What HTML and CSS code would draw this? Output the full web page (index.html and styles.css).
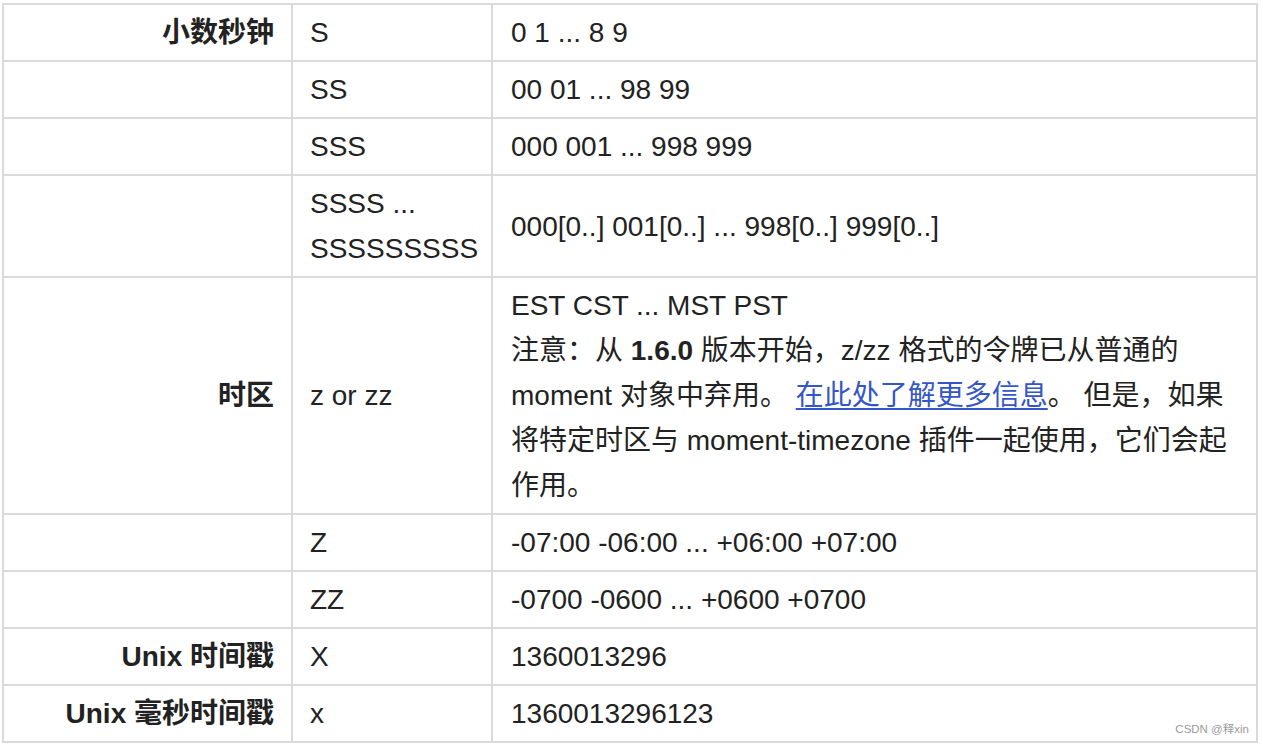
FILE: index.html
```html
<!DOCTYPE html>
<html lang="zh-CN">
<head>
<meta charset="utf-8">
<title>moment 格式令牌</title>
<link rel="stylesheet" href="styles.css">
</head>
<body>
<div class="page">
  <table class="tokens">
    <colgroup>
      <col class="c-name">
      <col class="c-token">
      <col class="c-out">
    </colgroup>
    <tbody>
      <tr><th>小数秒钟</th><td>S</td><td class="out">0 1 ... 8 9</td></tr>
      <tr><th></th><td>SS</td><td class="out">00 01 ... 98 99</td></tr>
      <tr><th></th><td>SSS</td><td class="out">000 001 ... 998 999</td></tr>
      <tr><th></th><td>SSSS ... SSSSSSSSS</td><td class="out">000[0..] 001[0..] ... 998[0..] 999[0..]</td></tr>
      <tr><th>时区</th><td>z or zz</td><td class="out">EST CST ... MST PST<br>注意：从 <strong>1.6.0</strong> 版本开始，z/zz 格式的令牌已从普通的 moment 对象中弃用。 <a href="#">在此处了解更多信息</a>。 但是，如果将特定时区与 moment-timezone 插件一起使用，它们会起作用。</td></tr>
      <tr><th></th><td>Z</td><td class="out">-07:00 -06:00 ... +06:00 +07:00</td></tr>
      <tr><th></th><td>ZZ</td><td class="out">-0700 -0600 ... +0600 +0700</td></tr>
      <tr><th>Unix 时间戳</th><td>X</td><td class="out">1360013296</td></tr>
      <tr><th>Unix 毫秒时间戳</th><td>x</td><td class="out">1360013296123</td></tr>
    </tbody>
  </table>
  <div class="watermark">CSDN @释xin</div>
</div>
</body>
</html>
```

FILE: styles.css
```css
html, body {
  margin: 0;
  padding: 0;
  background: #ffffff;
}

body {
  font-family: "Liberation Sans", "Noto Sans CJK SC", sans-serif;
  color: #222222;
}

.page {
  position: relative;
  width: 1263px;
  height: 744px;
  overflow: hidden;
  padding: 3px 0 0 2px;
  box-sizing: border-box;
}

.tokens {
  border-collapse: collapse;
  table-layout: fixed;
  width: 1256px;
  font-size: 28px;
  line-height: 45px;
}

.c-name { width: 289px; }
.c-token { width: 200px; }
.c-out { width: 765px; }

.tokens th,
.tokens td {
  border: 2px solid #dadada;
  padding: 5px 18px 5px 17px;
  vertical-align: middle;
  text-align: left;
  font-weight: normal;
}

.tokens td.out {
  padding-left: 18px;
}

.tokens th {
  text-align: right;
  font-weight: bold;
  padding-right: 17px;
}

.tokens strong {
  font-weight: bold;
}

.tokens a {
  color: #3356c8;
  text-decoration: underline;
  text-underline-offset: 3px;
}

.watermark {
  position: absolute;
  right: 14px;
  bottom: 8px;
  font-size: 11.5px;
  line-height: 14px;
  color: #9a9a9a;
  font-family: "Liberation Sans", "Noto Sans CJK SC", sans-serif;
}
```
